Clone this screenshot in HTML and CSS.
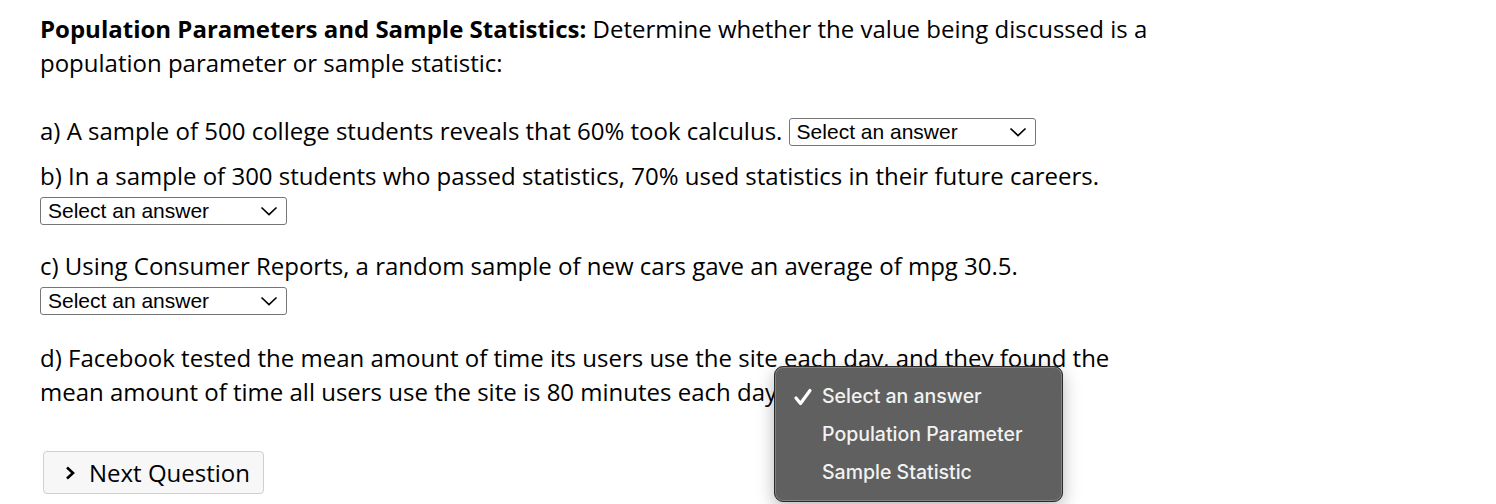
FILE: index.html
```html
<!DOCTYPE html>
<html lang="en">
<head>
    <meta charset="UTF-8">
    <meta name="viewport" content="width=device-width, initial-scale=1.0">
    <title>Population Parameters and Sample Statistics</title>
    <link rel="stylesheet" href="styles.css">
</head>
<body>
    <div class="question">
        <p class="intro"><strong>Population Parameters and Sample Statistics:</strong> Determine whether the value being discussed is a population parameter or sample statistic:</p>

        <p class="part part-a">a) A sample of 500 college students reveals that 60% took calculus.
            <span class="select-wrap">
                <select>
                    <option>Select an answer</option>
                    <option>Population Parameter</option>
                    <option>Sample Statistic</option>
                </select>
                <svg class="chevron" viewBox="0 0 18 10" width="18" height="10"><path d="M1.5 1.5 L9 8.5 L16.5 1.5" fill="none" stroke="#000" stroke-width="1.7"/></svg>
            </span>
        </p>

        <p class="part">b) In a sample of 300 students who passed statistics, 70% used statistics in their future careers.
            <span class="select-wrap">
                <select>
                    <option>Select an answer</option>
                    <option>Population Parameter</option>
                    <option>Sample Statistic</option>
                </select>
                <svg class="chevron" viewBox="0 0 18 10" width="18" height="10"><path d="M1.5 1.5 L9 8.5 L16.5 1.5" fill="none" stroke="#000" stroke-width="1.7"/></svg>
            </span>
        </p>

        <p class="part part-c">c) Using Consumer Reports, a random sample of new cars gave an average of mpg 30.5.
            <span class="select-wrap">
                <select>
                    <option>Select an answer</option>
                    <option>Population Parameter</option>
                    <option>Sample Statistic</option>
                </select>
                <svg class="chevron" viewBox="0 0 18 10" width="18" height="10"><path d="M1.5 1.5 L9 8.5 L16.5 1.5" fill="none" stroke="#000" stroke-width="1.7"/></svg>
            </span>
        </p>

        <p class="part part-d">d) Facebook tested the mean amount of time its users use the site each day, and they found the mean amount of time all users use the site is 80 minutes each day.
            <span class="select-wrap">
                <select>
                    <option>Select an answer</option>
                    <option>Population Parameter</option>
                    <option>Sample Statistic</option>
                </select>
                <svg class="chevron" viewBox="0 0 18 10" width="18" height="10"><path d="M1.5 1.5 L9 8.5 L16.5 1.5" fill="none" stroke="#000" stroke-width="1.7"/></svg>
            </span>
        </p>

        <button class="next-btn" type="button">
            <svg viewBox="0 0 11 14" width="11" height="14"><path d="M2 1.5 L8 7 L2 12.5" fill="none" stroke="#000" stroke-width="2.6"/></svg>
            Next Question
        </button>
    </div>

    <!-- menu aberto do select d) -->
    <ul class="popup-menu">
        <li class="selected">
            <svg class="check" viewBox="0 0 20 18" width="20" height="18"><path d="M3 10 L7.5 15.5 L17 2.5" fill="none" stroke="#fff" stroke-width="3.2" stroke-linecap="round" stroke-linejoin="round"/></svg>
            Select an answer
        </li>
        <li>Population Parameter</li>
        <li>Sample Statistic</li>
    </ul>
</body>
</html>
```

FILE: styles.css
```css
* {
    box-sizing: border-box;
}

html,
body {
    min-height: 100vh;
}

body {
    margin: 0;
    font-family: 'Open Sans', sans-serif;
    font-size: 24px;
    line-height: 34px;
    color: #000;
    background: #fff;
    position: relative;
}

.question {
    max-width: 1165px;
    padding: 12px 0 0 40px;
}

.intro {
    margin: 0 0 34px;
}

.part {
    margin: 0 0 22px;
}

.part-a {
    margin-bottom: 11px;
}

.part-c {
    margin-bottom: 24px;
}

.part-d {
    margin-bottom: 42px;
}

.select-wrap {
    display: inline-block;
    position: relative;
    vertical-align: middle;
    margin: -2px 0 2px;
}

.select-wrap select {
    -webkit-appearance: none;
    appearance: none;
    display: block;
    width: 247px;
    height: 28px;
    padding: 0 30px 0 7px;
    font-family: 'Liberation Sans', Arial, sans-serif;
    font-size: 21px;
    line-height: 26px;
    color: #000;
    background: #fff;
    border: 1px solid #767676;
    border-radius: 3px;
}

.select-wrap .chevron {
    position: absolute;
    right: 9px;
    top: 9px;
    pointer-events: none;
}

.next-btn {
    display: inline-flex;
    align-items: center;
    gap: 13px;
    margin-left: 3px;
    height: 43px;
    padding: 0 13px 0 21px;
    font-family: 'Open Sans', sans-serif;
    font-size: 24px;
    color: #000;
    background: #f7f7f7;
    border: 1px solid #d0d0d0;
    border-radius: 4px;
}

.popup-menu {
    position: absolute;
    left: 774px;
    top: 366px;
    width: 289px;
    margin: 0;
    padding: 10px 0;
    list-style: none;
    background: #5f605f;
    border: 1px solid #2a2a2a;
    border-radius: 9px;
    box-shadow: inset 0 0 0 1px rgba(255, 255, 255, 0.22), 0 6px 18px rgba(0, 0, 0, 0.28);
    font-family: 'Inter', 'Roboto', sans-serif;
    font-size: 19.5px;
    font-weight: 500;
    line-height: 38px;
    color: #f2f2f2;
}

.popup-menu li {
    position: relative;
    padding-left: 47px;
}

.popup-menu .check {
    position: absolute;
    left: 18px;
    top: 11px;
}
```
